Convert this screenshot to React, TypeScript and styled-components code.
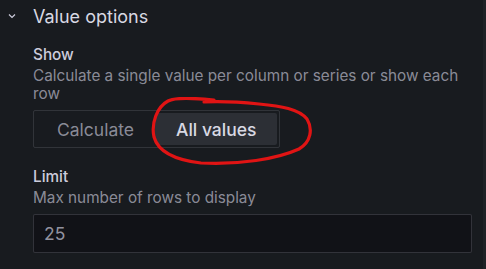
import styled, { createGlobalStyle } from 'styled-components';

const GlobalStyle = createGlobalStyle`
  html, body {
    margin: 0;
    padding: 0;
    background: #181b1f;
  }
  body {
    font-family: Inter, 'Noto Sans', 'Liberation Sans', sans-serif;
    color: #ccccdc;
  }
`;

const Page = styled.div`
  display: flex;
  width: 486px;
  height: 269px;
  overflow: hidden;
  background: #181b1f;
`;

const Pane = styled.div`
  flex: 1;
  display: flex;
  flex-direction: column;
`;

const ScrollTrack = styled.div`
  width: 3px;
  background: #1f2226;
`;

const SectionHeader = styled.div`
  display: flex;
  align-items: center;
  height: 32px;
  padding-left: 8px;
`;

const Chevron = styled.svg`
  width: 8px;
  height: 8px;
  margin-right: 17px;
  color: #ccccdc;
`;

const SectionTitle = styled.div`
  font-size: 18px;
  font-weight: 400;
  color: #d8d9e3;
`;

const SectionBody = styled.div`
  padding: 13px 11px 0 33px;
  display: flex;
  flex-direction: column;
`;

const Field = styled.div<{ $gap?: number }>`
  display: flex;
  flex-direction: column;
  margin-bottom: ${(p) => p.$gap ?? 0}px;
`;

const Label = styled.div`
  font-size: 15.3px;
  font-weight: 500;
  line-height: 20px;
  color: #ccccdc;
`;

const Description = styled.div`
  font-size: 15.3px;
  line-height: 18px;
  margin: 2px 0 7px;
  color: rgba(204, 204, 220, 0.65);
`;

const RadioGroup = styled.div`
  position: relative;
  align-self: flex-start;
  display: flex;
  padding: 2px;
  border: 1px solid rgba(204, 204, 220, 0.14);
  border-radius: 2px;
  height: 32px;
`;

const RadioButton = styled.div<{ $active?: boolean }>`
  display: flex;
  align-items: center;
  padding: 0 21px;
  font-size: 17.5px;
  font-weight: ${(p) => (p.$active ? 500 : 400)};
  border-radius: 2px;
  color: ${(p) => (p.$active ? '#d8d9e3' : 'rgba(204, 204, 220, 0.65)')};
  background: ${(p) => (p.$active ? '#2c2f35' : 'transparent')};
`;

const Scribble = styled.svg`
  position: absolute;
  left: 115px;
  top: -14px;
  width: 165px;
  height: 68px;
  pointer-events: none;
`;

const Input = styled.div`
  display: flex;
  align-items: center;
  height: 37px;
  padding: 0 10px;
  background: #111217;
  border: 1px solid rgba(204, 204, 220, 0.18);
  border-radius: 2px;
  font-size: 17.5px;
  color: rgba(204, 204, 220, 0.7);
`;

export default function App() {
  return (
    <Page>
      <GlobalStyle />
      <Pane>
        <SectionHeader>
          <Chevron viewBox="0 0 8 8" fill="none">
            <path d="M1 2.5 L4 5.5 L7 2.5" stroke="currentColor" strokeWidth="1.2" />
          </Chevron>
          <SectionTitle>Value options</SectionTitle>
        </SectionHeader>
        <SectionBody>
          <Field $gap={19}>
            <Label>Show</Label>
            <Description>
              Calculate a single value per column or series or show each row
            </Description>
            <RadioGroup>
              <RadioButton>Calculate</RadioButton>
              <RadioButton $active>All values</RadioButton>
              <Scribble viewBox="0 0 165 68" fill="none">
                <path
                  d="M65 3 C45 1 26 0 19 4 C8 10 2 26 5 40 C9 54 26 63 52 66 C90 68 128 62 150 52 C162 45 164 32 158 22 C150 12 132 9 110 7 C90 5 72 4 55 5"
                  stroke="#e01414"
                  strokeWidth="3.2"
                  strokeLinecap="round"
                  strokeLinejoin="round"
                />
              </Scribble>
            </RadioGroup>
          </Field>
          <Field>
            <Label>Limit</Label>
            <Description>Max number of rows to display</Description>
            <Input>25</Input>
          </Field>
        </SectionBody>
      </Pane>
      <ScrollTrack />
    </Page>
  );
}
